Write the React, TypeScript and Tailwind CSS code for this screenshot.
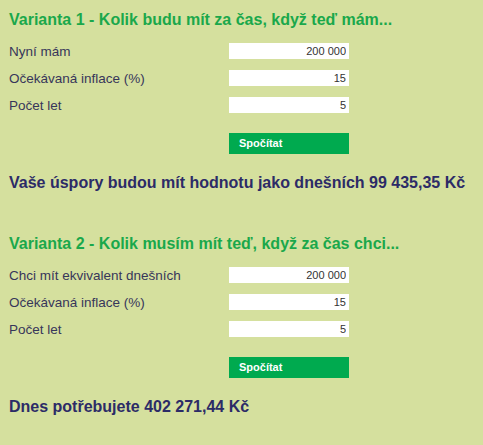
import React from "react";

type Field = { label: string; value: string };

const Section = ({
  title,
  fields,
  result,
}: {
  title: string;
  fields: Field[];
  result: string;
}) => {
  return (
    <section className="mb-[39px]">
      <h2 className="text-[16px] leading-[22px] font-bold text-[#1aa84b]">{title}</h2>
      <div className="mt-[12px] flex flex-col gap-[11px]">
        {fields.map((f) => (
          <div key={f.label} className="flex h-4 items-center">
            <label className="w-[220px] pt-[2px] text-[13.5px] leading-4 text-[#37365a]">{f.label}</label>
            <input
              readOnly
              value={f.value}
              className="h-4 w-[120px] bg-white px-[3px] text-right text-[11px] leading-4 text-[#333] outline-none"
            />
          </div>
        ))}
      </div>
      <div className="mt-[20px] flex">
        <div className="w-[220px]" />
        <button className="h-[21px] w-[120px] bg-[#00aa4f] pl-[10px] text-left text-[11px] font-bold text-white">
          Spočítat
        </button>
      </div>
      <p className="mt-[18px] text-[16px] leading-[22px] font-bold text-[#2c2b67]">{result}</p>
    </section>
  );
};

export default function App() {
  return (
    <div className="min-h-[445px] w-[483px] bg-[#d5e09e] pl-[9px] pt-[9px] font-['Liberation_Sans',Arial,sans-serif]">
      <Section
        title="Varianta 1 - Kolik budu mít za čas, když teď mám..."
        fields={[
          { label: "Nyní mám", value: "200 000" },
          { label: "Očekávaná inflace (%)", value: "15" },
          { label: "Počet let", value: "5" },
        ]}
        result="Vaše úspory budou mít hodnotu jako dnešních 99 435,35 Kč"
      />
      <Section
        title="Varianta 2 - Kolik musím mít teď, když za čas chci..."
        fields={[
          { label: "Chci mít ekvivalent dnešních", value: "200 000" },
          { label: "Očekávaná inflace (%)", value: "15" },
          { label: "Počet let", value: "5" },
        ]}
        result="Dnes potřebujete 402 271,44 Kč"
      />
    </div>
  );
}
